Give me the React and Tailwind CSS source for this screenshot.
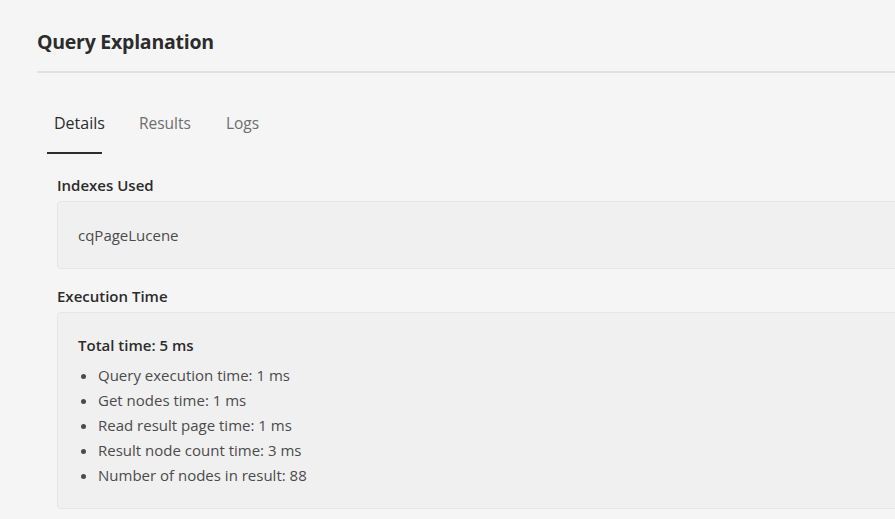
export default function App() {
  const items = [
    'Query execution time: 1 ms',
    'Get nodes time: 1 ms',
    'Read result page time: 1 ms',
    'Result node count time: 3 ms',
    'Number of nodes in result: 88',
  ];

  return (
    <div className="min-h-screen w-[895px] h-[519px] overflow-hidden bg-[#f5f5f5] text-[#2c2c2c]" style={{ fontFamily: '"Open Sans", "Noto Sans", sans-serif' }}>
      <div className="pl-[37px] pt-[28px]">
        <h1 className="text-[19.5px] font-bold leading-[28px] tracking-[-0.25px]">Query Explanation</h1>
        <div className="mt-[15px] h-[2px] bg-[#e1e1e1] w-[900px]" />

        {/* Tabs */}
        <div className="flex pl-[10px] mt-[35px]">
          <div className="flex flex-col">
            <span className="px-[7px] text-[16px] leading-[30px] text-[#2c2c2c]">Details</span>
            <div className="mt-[14px] h-[2px] bg-[#2c2c2c] w-[55px]" />
          </div>
          <span className="ml-[27px] text-[15.5px] leading-[30px] text-[#6e6e6e]">Results</span>
          <span className="ml-[35px] text-[15.5px] leading-[30px] text-[#6e6e6e]">Logs</span>
        </div>

        <div className="pl-[20px]">
          <h2 className="mt-[20px] text-[15px] font-semibold leading-[22px]">Indexes Used</h2>
          <div className="mt-[5px] h-[68px] w-[900px] rounded-[4px] border border-[#e6e6e6] bg-[#f0f0f0] flex items-center pl-[20px]">
            <span className="text-[15px] text-[#4b4b4b]">cqPageLucene</span>
          </div>

          <h2 className="mt-[16px] text-[15px] font-semibold leading-[22px]">Execution Time</h2>
          <div className="mt-[5px] h-[197px] w-[900px] rounded-[4px] border border-[#e6e6e6] bg-[#f0f0f0] pl-[20px] pt-[21px]">
            <div className="text-[15px] font-semibold leading-[22px]">Total time: 5 ms</div>
            <ul className="mt-[7px] list-disc pl-[20px] text-[15px] leading-[25px] text-[#4b4b4b]">
              {items.map((t) => (
                <li key={t}>{t}</li>
              ))}
            </ul>
          </div>
        </div>
      </div>
    </div>
  );
}
